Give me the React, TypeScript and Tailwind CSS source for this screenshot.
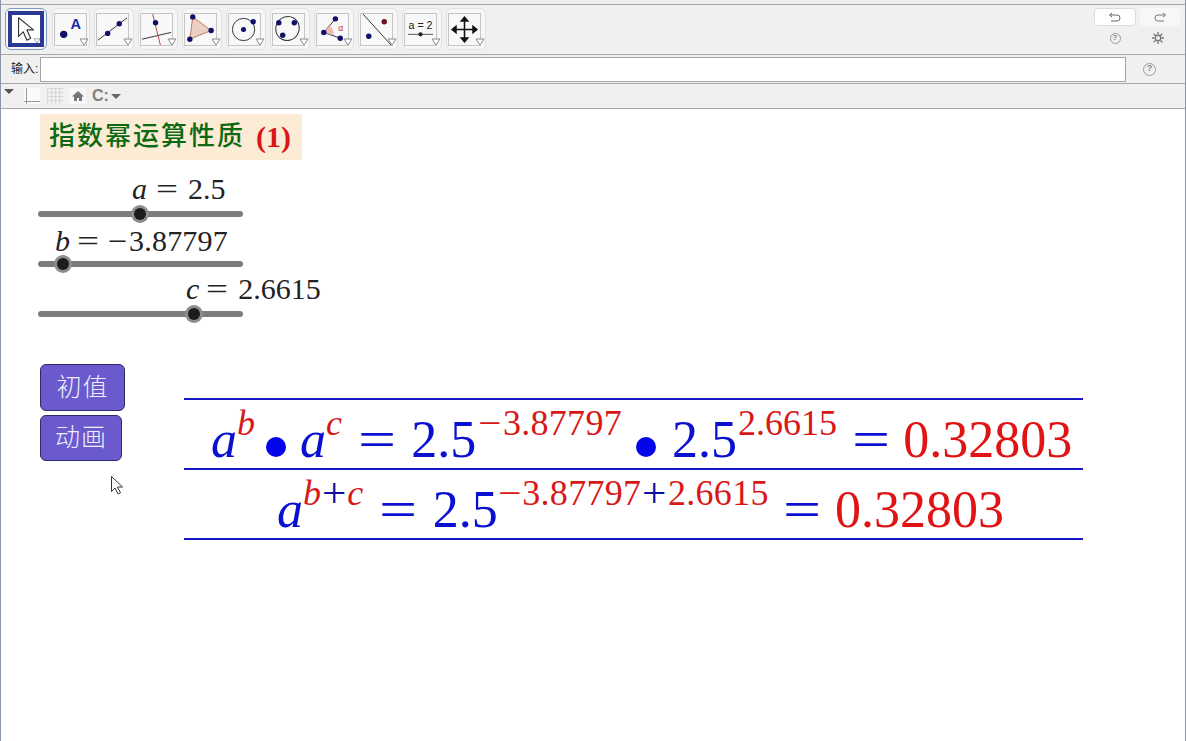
import type { ReactNode } from 'react';

const NAVY = '#10106a';

function Dot({ x, y, r = 3.4, fill = NAVY }: { x: number; y: number; r?: number; fill?: string }) {
  return <circle cx={x} cy={y} r={r} fill={fill} />;
}

function ToolButton({ children, wide = true }: { children: ReactNode; wide?: boolean }) {
  return (
    <div className={`relative h-[42px] shrink-0 rounded-md border border-[#e2e2e2] bg-[#f7f7f7] ${wide ? 'w-[40px]' : 'w-[38px]'}`}>
      <div className="absolute left-[1px] top-[4px] h-[33px] w-[33px] border border-[#c4c4c4] bg-[#f8f8f8]">
        <svg viewBox="0 0 32 32" className="h-full w-full">
          {children}
        </svg>
      </div>
      <svg viewBox="0 0 10 8" className="absolute bottom-[3px] right-[0px] h-[8px] w-[10px]">
        <path d="M1 1h8L5 7z" fill="#fff" stroke="#8a8a8a" strokeWidth="1" />
      </svg>
    </div>
  );
}

function HelpIcon({ size }: { size: string }) {
  return (
    <span className={`flex items-center justify-center rounded-full border border-[#9a9a9a] text-[#8a8a8a] font-bold ${size}`}>
      ?
    </span>
  );
}

function Slider({ thumb }: { thumb: string }) {
  return (
    <div className="relative h-[6px] w-[205px] rounded-full bg-[#7c7c7c]">
      <div className={`absolute top-[-6px] flex h-[18px] w-[18px] items-center justify-center rounded-full bg-[#8d8d8d] ${thumb}`}>
        <div className="h-[12px] w-[12px] rounded-full bg-[#1c1c1c]" />
      </div>
    </div>
  );
}

function Equals({ className }: { className: string }) {
  return <span className={`inline-block origin-left scale-x-[1.3] ${className}`}>=</span>;
}

function Minus({ className }: { className: string }) {
  return <span className={`inline-block origin-left scale-x-[1.15] ${className}`}>−</span>;
}

export default function App() {
  return (
    <div className="relative flex h-[741px] w-full flex-col overflow-hidden border-x border-[#8a97a8] bg-white font-['Liberation_Sans','Noto_Sans_CJK_SC',sans-serif]">
      {/* Toolbar */}
      <div className="h-[4px] bg-[#efefef]" />
      <div className="flex h-[51px] items-start justify-between border-y border-[#a8a8a8] bg-[#f0f0f0] pr-[5px]">
        <div className="flex items-start gap-[4px] pl-[4px] pt-[3px]">
          <div className="mr-[1px] h-[42px] w-[42px] shrink-0 rounded-md border border-[#7d9cc4] bg-[#f7f7f7] p-[2px]">
            <div className="relative h-full w-full border-[4px] border-[#2a3a94] bg-white">
              <svg viewBox="0 0 30 30" className="h-full w-full">
                <path d="M7 3v20l5-5 4 9 4-2-4-9h7z" fill="#fff" stroke="#333" strokeWidth="1.2" strokeLinejoin="round" />
              </svg>
              <svg viewBox="0 0 10 8" className="absolute bottom-[-1px] right-[-1px] h-[6px] w-[8px]">
                <path d="M1 1h8L5 7z" fill="#fff" stroke="#8a8a8a" strokeWidth="1" />
              </svg>
            </div>
          </div>
          <ToolButton wide={false}>
            <Dot x={9} y={21} r={3.8} />
            <text x={16} y={15} fontSize={15} fontWeight={700} fill="#1a2aa8" fontFamily="Liberation Sans">A</text>
          </ToolButton>
          <ToolButton>
            <path d="M1 27 31 4" stroke="#333" strokeWidth="1" />
            <Dot x={11} y={20} r={2.8} />
            <Dot x={23} y={10} r={2.8} />
          </ToolButton>
          <ToolButton>
            <path d="M1 26 31 19" stroke="#333" strokeWidth="1" />
            <path d="M12 0 20 32" stroke="#b5484e" strokeWidth="1" />
            <Dot x={15} y={9} r={2.8} />
          </ToolButton>
          <ToolButton>
            <path d="M8 3 27 17 5 26z" fill="#eccfc2" stroke="#b87a60" strokeWidth="1" />
            <Dot x={8} y={3} r={2.8} />
            <Dot x={27} y={17} r={2.8} />
            <Dot x={5} y={26} r={2.8} />
          </ToolButton>
          <ToolButton>
            <circle cx={15} cy={16} r={11.5} fill="none" stroke="#333" strokeWidth="1" />
            <Dot x={15} y={16} r={2.6} />
            <Dot x={25} y={8} r={2.8} />
          </ToolButton>
          <ToolButton>
            <ellipse cx={15} cy={15} rx={12} ry={12.5} fill="none" stroke="#333" strokeWidth="1" transform="rotate(30 15 15)" />
            <Dot x={6} y={9} r={2.8} />
            <Dot x={22} y={9} r={2.8} />
            <Dot x={10} y={22} r={2.8} />
          </ToolButton>
          <ToolButton>
            <path d="M7 19 19 5M7 19 24 25" stroke="#333" strokeWidth="1" />
            <path d="M7 19 13 12A10 10 0 0 1 17 22z" fill="#efb9b4" />
            <Dot x={7} y={19} r={2.8} />
            <Dot x={19} y={5} r={2.8} />
            <Dot x={24} y={25} r={2.8} />
            <text x={22} y={18} fontSize={9} fill="#c33" fontFamily="Liberation Sans">α</text>
          </ToolButton>
          <ToolButton>
            <path d="M2 0 31 32" stroke="#333" strokeWidth="1" />
            <Dot x={8} y={23} r={2.8} />
            <Dot x={24} y={8} r={2.8} fill="#6e1420" />
          </ToolButton>
          <ToolButton>
            <text x={16} y={15} textAnchor="middle" fontSize={11} fill="#222" fontFamily="Liberation Sans">a = 2</text>
            <path d="M3 21H29" stroke="#555" strokeWidth="1" />
            <Dot x={16} y={21} r={2.2} fill="#222" />
          </ToolButton>
          <ToolButton>
            <path d="M16 4v24M4 16h24" stroke="#111" strokeWidth="1.6" />
            <path d="M16 2l-5 6h10zM16 30l-5-6h10zM2 16l6-5v10zM30 16l-6-5v10z" fill="#111" />
          </ToolButton>
        </div>
        <div className="flex flex-col items-center pt-[3px]">
          <div className="flex gap-[4px]">
            <div className="flex h-[18px] w-[42px] items-center justify-center rounded-[4px] border border-[#dcdcdc] bg-white">
              <svg viewBox="0 0 14 10" className="h-[10px] w-[14px]" fill="none" stroke="#666" strokeWidth="1">
                <path d="M4 1 1.5 3 4 5M2 3h7a3 3 0 0 1 0 6H3" />
              </svg>
            </div>
            <div className="flex h-[18px] w-[40px] items-center justify-center rounded-[4px] bg-[#f7f7f7]">
              <svg viewBox="0 0 14 10" className="h-[10px] w-[14px]" fill="none" stroke="#777" strokeWidth="1">
                <path d="M10 1 12.5 3 10 5M12 3H5a3 3 0 0 0 0 6h6" />
              </svg>
            </div>
          </div>
          <div className="mt-[6px] flex w-full items-center justify-around pr-[1px]">
            <HelpIcon size="h-[11px] w-[11px] text-[8px]" />
            <svg viewBox="0 0 14 14" className="h-[12px] w-[12px]" fill="none" stroke="#777" strokeWidth="1.6">
              <circle cx="7" cy="7" r="3.2" />
              <path d="M7 0v3M7 11v3M0 7h3M11 7h3M2 2l2 2M10 10l2 2M12 2l-2 2M4 10l-2 2" />
            </svg>
          </div>
        </div>
      </div>

      {/* Input bar */}
      <div className="flex h-[29px] items-center border-b border-[#a8a8a8] bg-[#f0f0f0] pl-[10px]">
        <span className="w-[29px] text-[12px] text-[#222]">输入:</span>
        <div className="h-[25px] w-[1086px] border border-[#a5a5a5] bg-white" />
        <div className="ml-[17px]">
          <HelpIcon size="h-[13px] w-[13px] text-[9px]" />
        </div>
      </div>

      {/* Style bar */}
      <div className="flex h-[25px] items-center border-b border-[#a8a8a8] bg-[#f0f0f0]">
        <svg viewBox="0 0 10 5" className="mb-[9px] ml-[3px] h-[5px] w-[10px]">
          <path d="M0 0h10L5 5z" fill="#555" />
        </svg>
        <svg viewBox="0 0 16 16" className="ml-[10px] h-[16px] w-[16px] bg-[#fafafa]" fill="none" stroke="#999" strokeWidth="1">
          <path d="M2.5 0v16M0 13.5h16" />
        </svg>
        <svg viewBox="0 0 16 16" className="ml-[7px] h-[16px] w-[16px]" fill="none" stroke="#d8d8d8" strokeWidth="1">
          <path d="M.5 0v16M4.5 0v16M8.5 0v16M12.5 0v16M0 .5h16M0 4.5h16M0 8.5h16M0 12.5h16" />
        </svg>
        <div className="ml-[6px] flex h-[16px] w-[17px] items-center justify-center bg-[#f8f8f8]">
          <svg viewBox="0 0 12 12" className="h-[12px] w-[12px]">
            <path d="M6 1 0 6.5h2V11h3V8h2v3h3V6.5h2z" fill="#777" />
          </svg>
        </div>
        <span className="ml-[6px] text-[16px] font-bold leading-none text-[#808080]">C:</span>
        <svg viewBox="0 0 10 5" className="ml-[2px] h-[5px] w-[10px]">
          <path d="M0 0h10L5 5z" fill="#666" />
        </svg>
      </div>

      {/* Graphics view */}
      <div className="relative flex-1 bg-white font-['Liberation_Serif','Noto_Sans_CJK_SC',serif]">
        <div className="absolute left-[39px] top-[5px] flex h-[46px] w-[262px] items-center gap-[11px] bg-[#fcebd5] pl-[9px]">
          <span className="text-[26px] font-medium leading-none tracking-[2px] text-[#0d6a12]">指数幂运算性质</span>
          <span className="text-[30px] font-bold leading-none text-[#d81818]">(1)</span>
        </div>

        <div className="absolute left-[131px] top-[65px] text-[30px] leading-none text-[#222]">
          <i>a</i>
          <Equals className="ml-[9px]" />
          <span className="ml-[15px]">2.5</span>
        </div>
        <div className="absolute left-[37px] top-[102px]">
          <Slider thumb="left-[93px]" />
        </div>

        <div className="absolute left-[54px] top-[117px] text-[30px] leading-none text-[#222]">
          <i>b</i>
          <Equals className="ml-[7px]" />
          <span className="ml-[14px] tracking-[0.2px]">
            <Minus className="mr-[4px]" />3.87797
          </span>
        </div>
        <div className="absolute left-[37px] top-[152px]">
          <Slider thumb="left-[16px]" />
        </div>

        <div className="absolute left-[185px] top-[165px] text-[30px] leading-none text-[#222]">
          <i>c</i>
          <Equals className="ml-[7px]" />
          <span className="ml-[15px]">2.6615</span>
        </div>
        <div className="absolute left-[37px] top-[202px]">
          <Slider thumb="left-[147px]" />
        </div>

        <div className="absolute left-[39px] top-[255px] flex h-[47px] w-[85px] items-center justify-center rounded-md border border-[#2c2c66] bg-[#6a5acd] text-[25px] font-light tracking-[1px] text-[#eeeeff]">
          初值
        </div>
        <div className="absolute left-[39px] top-[306px] flex h-[46px] w-[82px] items-center justify-center rounded-md border border-[#2c2c66] bg-[#6a5acd] text-[25px] font-light tracking-[1px] text-[#eeeeff]">
          动画
        </div>

        <svg viewBox="0 0 14 22" className="absolute left-[109px] top-[366px] h-[22px] w-[14px]">
          <path d="M1.5 1.5v15l3.5-3.5 3 6 2.5-1.2-3-5.8h5z" fill="#fff" stroke="#333" strokeWidth="1" strokeLinejoin="round" />
        </svg>

        <div className="absolute left-[183px] top-[289px] h-[2px] w-[899px] bg-[#1616c4]" />
        <div className="absolute left-[183px] top-[359px] h-[2px] w-[899px] bg-[#1616c4]" />
        <div className="absolute left-[183px] top-[429px] h-[2px] w-[899px] bg-[#1616c4]" />

        {/* First formula */}
        <div className="absolute left-[210px] top-[301px] flex items-baseline whitespace-nowrap text-[52px] leading-[60px] text-[#0a10d0]">
          <i>a</i>
          <i className="relative top-[-22px] text-[36px] leading-none text-[#d81818]">b</i>
          <span className="mb-[4px] ml-[11px] inline-block h-[20px] w-[20px] rounded-full bg-[#0505ec]" />
          <i className="ml-[14px]">a</i>
          <i className="relative top-[-22px] text-[36px] leading-none text-[#d81818]">c</i>
          <Equals className="ml-[16px]" />
          <span className="ml-[24px]">2.5</span>
          <span className="relative top-[-22px] ml-[2px] text-[36px] leading-none tracking-[0.3px] text-[#d81818]">
            <Minus className="mr-[4px]" />3.87797
          </span>
          <span className="mb-[4px] ml-[14px] inline-block h-[20px] w-[20px] rounded-full bg-[#0505ec]" />
          <span className="ml-[16px]">2.5</span>
          <span className="relative top-[-22px] ml-[1px] text-[36px] leading-none text-[#d81818]">2.6615</span>
          <Equals className="ml-[15px]" />
          <span className="ml-[22px] text-[#e01414]">0.32803</span>
        </div>

        {/* Second formula */}
        <div className="absolute left-[276px] top-[371px] flex items-baseline whitespace-nowrap text-[52px] leading-[60px] text-[#0a10d0]">
          <i>a</i>
          <span className="relative top-[-22px] text-[36px] leading-none text-[#d81818]">
            <i>b</i>
            <span className="mx-[3px] inline-block scale-[1.2] text-[#0a10a0]">+</span>
            <i>c</i>
          </span>
          <Equals className="ml-[16px]" />
          <span className="ml-[24px]">2.5</span>
          <span className="relative top-[-22px] text-[36px] leading-none tracking-[0.3px] text-[#d81818]">
            <Minus className="mr-[4px]" />3.87797
            <span className="mx-[3px] inline-block scale-[1.2] text-[#0a10a0]">+</span>
            2.6615
          </span>
          <Equals className="ml-[14px]" />
          <span className="ml-[23px] text-[#e01414]">0.32803</span>
        </div>
      </div>
    </div>
  );
}
